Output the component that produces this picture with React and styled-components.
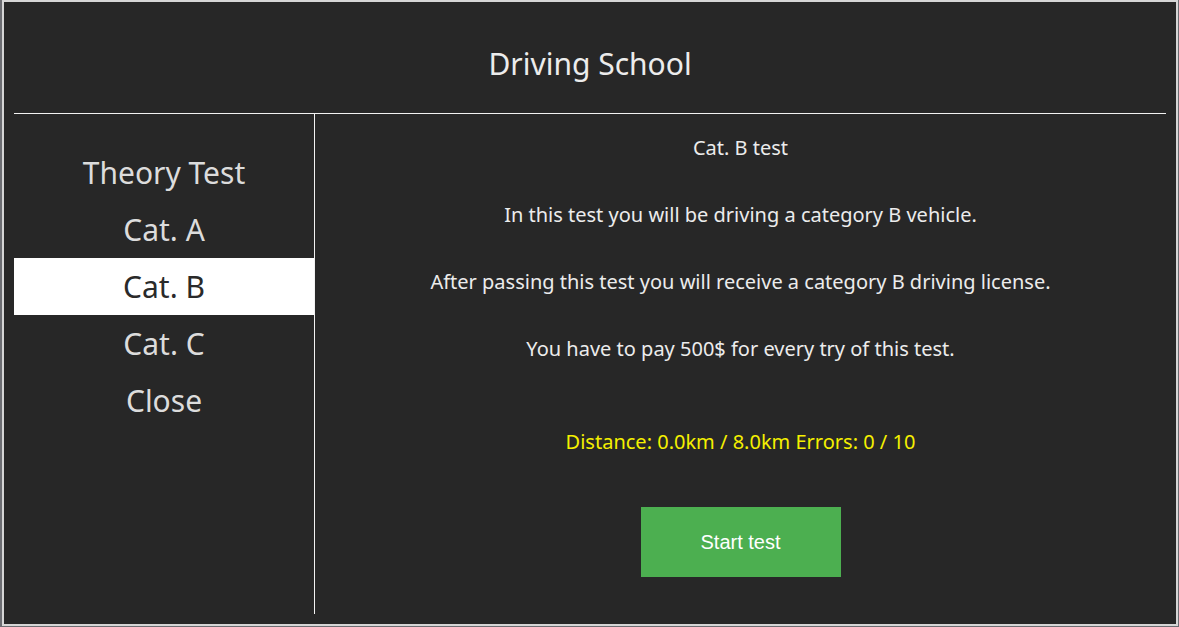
import styled, { createGlobalStyle } from 'styled-components'

const GlobalStyle = createGlobalStyle`
  html, body {
    margin: 0;
    padding: 0;
    background: #6c6d72;
  }
  * {
    box-sizing: border-box;
  }
`;

const menu = ['Theory Test', 'Cat. A', 'Cat. B', 'Cat. C', 'Close'];

const info = [
  'Cat. B test',
  'In this test you will be driving a category B vehicle.',
  'After passing this test you will receive a category B driving license.',
  'You have to pay 500$ for every try of this test.',
];

function App() {
  const selected = 'Cat. B';

  return (
    <>
      <GlobalStyle />
      <Window>
        <Header>Driving School</Header>
        <Body>
          <Sidebar>
            {menu.map((item) => (
              <MenuItem key={item} active={item === selected}>{item}</MenuItem>
            ))}
          </Sidebar>
          <Content>
            {info.map((line) => (
              <Line key={line}>{line}</Line>
            ))}
            <Stats>Distance: 0.0km / 8.0km Errors: 0 / 10</Stats>
            <StartButton>Start test</StartButton>
          </Content>
        </Body>
      </Window>
    </>
  )
}

export default App

const Window = styled.div`
  margin-left: 2px;
  width: 1176px;
  height: 626px;
  padding: 0 10px;
  background: #272727;
  border: 2px solid #d6d6d6;
  font-family: "Noto Sans", "Open Sans", sans-serif;
  color: #ececec;
`;

const Header = styled.div`
  height: 112px;
  display: flex;
  align-items: center;
  justify-content: center;
  padding-top: 11px;
  font-size: 30px;
  border-bottom: 1px solid #f2f2f2;
`;

const Body = styled.div`
  display: flex;
  height: 500px;
`;

const Sidebar = styled.div`
  width: 301px;
  padding-top: 30px;
  border-right: 1px solid #f2f2f2;
  display: flex;
  flex-direction: column;
`;

const MenuItem = styled.div`
  height: 57px;
  display: flex;
  align-items: center;
  justify-content: center;
  font-size: 30px;
  color: ${(p) => (p.active ? '#2a2a2a' : '#dcdcdc')};
  background: ${(p) => (p.active ? '#ffffff' : 'transparent')};
  cursor: pointer;
`;

const Content = styled.div`
  flex: 1;
  padding-top: 21px;
  display: flex;
  flex-direction: column;
  align-items: center;
`;

const Line = styled.p`
  margin: 0 0 42px;
  font-size: 20px;
  line-height: 25px;
`;

const Stats = styled(Line)`
  margin-top: 26px;
  margin-bottom: 0;
  color: #f5f000;
`;

const StartButton = styled.button`
  margin-top: 53px;
  width: 200px;
  height: 70px;
  border: none;
  background: #4caf50;
  color: #fff;
  font-family: "Liberation Sans", Arial, sans-serif;
  font-size: 20px;
  cursor: pointer;
`;
